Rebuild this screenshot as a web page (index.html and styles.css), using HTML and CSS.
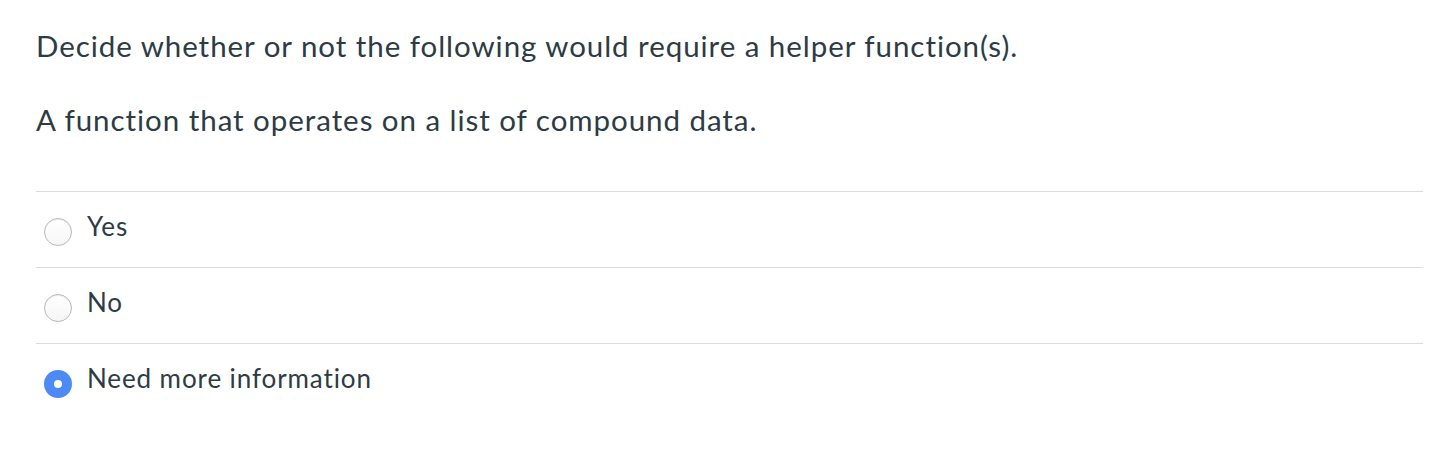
FILE: index.html
```html
<!DOCTYPE html>
<html lang="en">
<head>
<meta charset="utf-8">
<title>Quiz question</title>
<link rel="stylesheet" href="styles.css">
</head>
<body>
<div class="question">
  <div class="question-text">
    <p>Decide whether or not the following would require a helper function(s).</p>
    <p>A function that operates on a list of compound data.</p>
  </div>
  <div class="answers">
    <label class="answer">
      <span class="radio"></span>
      <span class="answer-label">Yes</span>
    </label>
    <label class="answer">
      <span class="radio"></span>
      <span class="answer-label">No</span>
    </label>
    <label class="answer">
      <span class="radio checked"></span>
      <span class="answer-label">Need more information</span>
    </label>
  </div>
</div>
</body>
</html>
```
FILE: styles.css
```css
html, body {
  margin: 0;
  padding: 0;
  background: #ffffff;
}
body {
  font-family: Lato, "Open Sans", sans-serif;
  color: #2d3b45;
  font-variant-ligatures: none;
}
.question {
  padding: 24px 7px 0 36px;
}
.question-text p {
  margin: 0 0 31px 0;
  font-size: 29.5px;
  line-height: 43px;
  letter-spacing: 0.95px;
}
.question-text {
  margin-bottom: 50px;
}
.question-text p:last-child {
  margin-bottom: 0;
}
.answers {
  display: flex;
  flex-direction: column;
}
.answer {
  display: flex;
  align-items: center;
  border-top: 1px solid #d9dcde;
  height: 75px;
  padding-left: 8px;
}
.radio {
  width: 28px;
  height: 28px;
  box-sizing: border-box;
  border-radius: 50%;
  border: 1px solid #b9b9b9;
  background: linear-gradient(#ffffff, #f6f6f6);
  box-shadow: inset 0 1px 1px rgba(0,0,0,0.08);
  margin-top: 4px;
  flex: none;
  display: flex;
  align-items: center;
  justify-content: center;
}
.radio.checked {
  border: none;
  background: #4c8bf5;
  box-shadow: none;
}
.radio.checked::after {
  content: "";
  width: 8px;
  height: 8px;
  border-radius: 50%;
  background: #ffffff;
}
.answer-label {
  margin-left: 15px;
  margin-bottom: 7px;
  font-size: 26px;
  line-height: 36px;
  letter-spacing: 0.9px;
}
```
